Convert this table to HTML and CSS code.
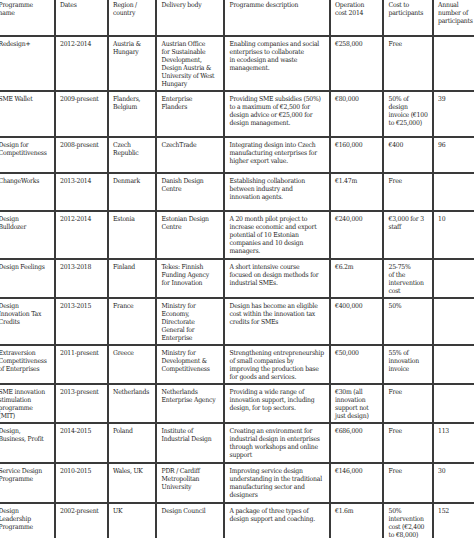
FILE: index.html
```html
<!DOCTYPE html>
<html lang="en">
<head>
<meta charset="utf-8">
<title>Design support programmes</title>
<link rel="stylesheet" href="styles.css">
</head>
<body>
<table class="programmes">
  <colgroup>
    <col class="c-name"><col class="c-dates"><col class="c-region"><col class="c-body"><col class="c-desc"><col class="c-cost"><col class="c-part"><col class="c-num">
  </colgroup>
  <thead>
    <tr class="r-head">
      <th>Programme<br>name</th>
      <th>Dates</th>
      <th>Region /<br>country</th>
      <th>Delivery body</th>
      <th>Programme description</th>
      <th>Operation<br>cost 2014</th>
      <th>Cost to<br>participants</th>
      <th>Annual<br>number of<br>participants</th>
    </tr>
  </thead>
  <tbody>
    <tr class="r1">
      <td>Redesign+</td>
      <td>2012-2014</td>
      <td>Austria &amp;<br>Hungary</td>
      <td>Austrian Office<br>for Sustainable<br>Development,<br>Design Austria &amp;<br>University of West<br>Hungary</td>
      <td>Enabling companies and social<br>enterprises to collaborate<br>in ecodesign and waste<br>management.</td>
      <td>€258,000</td>
      <td>Free</td>
      <td></td>
    </tr>
    <tr class="r2">
      <td>SME Wallet</td>
      <td>2009-present</td>
      <td>Flanders,<br>Belgium</td>
      <td>Enterprise<br>Flanders</td>
      <td>Providing SME subsidies (50%)<br>to a maximum of €2,500 for<br>design advice or €25,000 for<br>design management.</td>
      <td>€80,000</td>
      <td>50% of<br>design<br>invoice (€100<br>to €25,000)</td>
      <td>39</td>
    </tr>
    <tr class="r3">
      <td>Design for<br>Competitiveness</td>
      <td>2008-present</td>
      <td>Czech<br>Republic</td>
      <td>CzechTrade</td>
      <td>Integrating design into Czech<br>manufacturing enterprises for<br>higher export value.</td>
      <td>€160,000</td>
      <td>€400</td>
      <td>96</td>
    </tr>
    <tr class="r4">
      <td>ChangeWorks</td>
      <td>2013-2014</td>
      <td>Denmark</td>
      <td>Danish Design<br>Centre</td>
      <td>Establishing collaboration<br>between industry and<br>innovation agents.</td>
      <td>€1.47m</td>
      <td>Free</td>
      <td></td>
    </tr>
    <tr class="r5">
      <td>Design<br>Bulldozer</td>
      <td>2012-2014</td>
      <td>Estonia</td>
      <td>Estonian Design<br>Centre</td>
      <td>A 20 month pilot project to<br>increase economic and export<br>potential of 10 Estonian<br>companies and 10 design<br>managers.</td>
      <td>€240,000</td>
      <td>€3,000 for 3<br>staff</td>
      <td>10</td>
    </tr>
    <tr class="r6">
      <td>Design Feelings</td>
      <td>2013-2018</td>
      <td>Finland</td>
      <td>Tekes: Finnish<br>Funding Agency<br>for Innovation</td>
      <td>A short intensive course<br>focused on design methods for<br>industrial SMEs.</td>
      <td>€6.2m</td>
      <td>25-75%<br>of the<br>intervention<br>cost</td>
      <td></td>
    </tr>
    <tr class="r7">
      <td>Design<br>Innovation Tax<br>Credits</td>
      <td>2013-2015</td>
      <td>France</td>
      <td>Ministry for<br>Economy,<br>Directorate<br>General for<br>Enterprise</td>
      <td>Design has become an eligible<br>cost within the innovation tax<br>credits for SMEs</td>
      <td>€400,000</td>
      <td>50%</td>
      <td></td>
    </tr>
    <tr class="r8">
      <td>Extraversion<br>Competitiveness<br>of Enterprises</td>
      <td>2011-present</td>
      <td>Greece</td>
      <td>Ministry for<br>Development &amp;<br>Competitiveness</td>
      <td>Strengthening entrepreneurship<br>of small companies by<br>improving the production base<br>for goods and services.</td>
      <td>€50,000</td>
      <td>55% of<br>innovation<br>invoice</td>
      <td></td>
    </tr>
    <tr class="r9">
      <td>SME innovation<br>stimulation<br>programme<br>(MIT)</td>
      <td>2013-present</td>
      <td>Netherlands</td>
      <td>Netherlands<br>Enterprise Agency</td>
      <td>Providing a wide range of<br>innovation support, including<br>design, for top sectors.</td>
      <td>€30m (all<br>innovation<br>support not<br>just design)</td>
      <td>Free</td>
      <td></td>
    </tr>
    <tr class="r10">
      <td>Design,<br>Business, Profit</td>
      <td>2014-2015</td>
      <td>Poland</td>
      <td>Institute of<br>Industrial Design</td>
      <td>Creating an environment for<br>industrial design in enterprises<br>through workshops and online<br>support</td>
      <td>€686,000</td>
      <td>Free</td>
      <td>113</td>
    </tr>
    <tr class="r11">
      <td>Service Design<br>Programme</td>
      <td>2010-2015</td>
      <td>Wales, UK</td>
      <td>PDR / Cardiff<br>Metropolitan<br>University</td>
      <td>Improving service design<br>understanding in the traditional<br>manufacturing sector and<br>designers</td>
      <td>€146,000</td>
      <td>Free</td>
      <td>30</td>
    </tr>
    <tr class="r12">
      <td>Design<br>Leadership<br>Programme</td>
      <td>2002-present</td>
      <td>UK</td>
      <td>Design Council</td>
      <td>A package of three types of<br>design support and coaching.</td>
      <td>€1.6m</td>
      <td>50%<br>intervention<br>cost (€2,400<br>to €8,000)</td>
      <td>152</td>
    </tr>
  </tbody>
</table>
</body>
</html>
```
FILE: styles.css
```css
html, body {
  margin: 0;
  padding: 0;
  background: #ffffff;
  overflow: hidden;
}

body {
  width: 474px;
  height: 538px;
}

.programmes {
  border-collapse: separate;
  border-spacing: 0;
  table-layout: fixed;
  width: 530px;
  margin: -2px 0 0 -6px;
  font-family: "DejaVu Serif", "Liberation Serif", serif;
  font-stretch: condensed;
  font-size: 6.8px;
  letter-spacing: -0.22px;
  line-height: 8px;
  color: #1e1e1e;
}

.programmes th,
.programmes td {
  box-sizing: border-box;
  border: 0 solid #3a3a3a;
  border-right-width: 2px;
  border-bottom-width: 2px;
  padding: 3px 2px 0 4.5px;
  vertical-align: top;
  text-align: left;
  font-weight: normal;
  white-space: nowrap;
  overflow: hidden;
}

.c-name { width: 61.5px; }
.c-dates { width: 53px; }
.c-region { width: 48.5px; }
.c-body { width: 68px; }
.c-desc { width: 105.5px; }
.c-cost { width: 53.5px; }
.c-part { width: 49.5px; }
.c-num { width: 90.5px; }

.r-head { height: 39px; }
.r1 { height: 55px; }
.r2 { height: 46px; }
.r3 { height: 36px; }
.r4 { height: 38px; }
.r5 { height: 48px; }
.r6 { height: 39px; }
.r7 { height: 47px; }
.r8 { height: 39px; }
.r9 { height: 39px; }
.r10 { height: 40px; }
.r11 { height: 40px; }
.r12 { height: 48px; }
```
